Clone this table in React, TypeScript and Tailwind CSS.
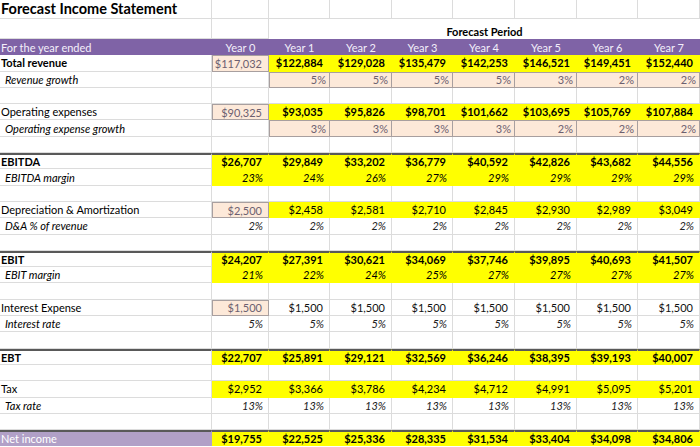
import React from 'react';

type Kind = 'w' | 'y' | 'p';
interface Val { t: string; k: Kind; b?: boolean; i?: boolean; p?: boolean }
interface Row { label?: string; ls?: 'b' | 'n' | 'i' | 'net'; cells: Val[]; thick?: boolean }

const COLS = ['w-[57px]', 'w-[61px]', 'w-[62px]', 'w-[61px]', 'w-[62px]', 'w-[62px]', 'w-[61px]', 'w-[62px]'];
const YEARS = ['Year 0', 'Year 1', 'Year 2', 'Year 3', 'Year 4', 'Year 5', 'Year 6', 'Year 7'];

const yb = (a: string[]): Val[] => a.map((t) => ({ t, k: 'y', b: true }));
const yn = (a: string[]): Val[] => a.map((t) => ({ t, k: 'y' }));
const yi = (a: string[]): Val[] => a.map((t) => ({ t, k: 'y', i: true, p: true }));
const wi = (a: string[]): Val[] => a.map((t) => ({ t, k: 'w', i: true, p: true }));
const wn = (a: string[]): Val[] => a.map((t) => ({ t, k: 'w' }));
const pp = (a: string[]): Val[] => a.map((t) => ({ t, k: 'p', p: true }));
const pv = (t: string): Val => ({ t, k: 'p' });
const blank = (): Val[] => Array.from({ length: 8 }, () => ({ t: '', k: 'w' as Kind }));
const same = (t: string) => Array.from({ length: 8 }, () => t);

const ROWS: Row[] = [
  { label: 'Total revenue', ls: 'b', cells: [pv('$117,032'), ...yb(['$122,884', '$129,028', '$135,479', '$142,253', '$146,521', '$149,451', '$152,440'])] },
  { label: 'Revenue growth', ls: 'i', cells: [{ t: '', k: 'w' }, ...pp(['5%', '5%', '5%', '5%', '3%', '2%', '2%'])] },
  { cells: blank() },
  { label: 'Operating expenses', ls: 'n', cells: [pv('$90,325'), ...yb(['$93,035', '$95,826', '$98,701', '$101,662', '$103,695', '$105,769', '$107,884'])] },
  { label: 'Operating expense growth', ls: 'i', cells: [{ t: '', k: 'w' }, ...pp(['3%', '3%', '3%', '3%', '2%', '2%', '2%'])] },
  { cells: blank() },
  { label: 'EBITDA', ls: 'b', thick: true, cells: yb(['$26,707', '$29,849', '$33,202', '$36,779', '$40,592', '$42,826', '$43,682', '$44,556']) },
  { label: 'EBITDA margin', ls: 'i', cells: yi(['23%', '24%', '26%', '27%', '29%', '29%', '29%', '29%']) },
  { cells: blank() },
  { label: 'Depreciation & Amortization', ls: 'n', cells: [pv('$2,500'), ...yn(['$2,458', '$2,581', '$2,710', '$2,845', '$2,930', '$2,989', '$3,049'])] },
  { label: 'D&A % of revenue', ls: 'i', cells: wi(same('2%')) },
  { cells: blank() },
  { label: 'EBIT', ls: 'b', thick: true, cells: yb(['$24,207', '$27,391', '$30,621', '$34,069', '$37,746', '$39,895', '$40,693', '$41,507']) },
  { label: 'EBIT margin', ls: 'i', cells: yi(['21%', '22%', '24%', '25%', '27%', '27%', '27%', '27%']) },
  { cells: blank() },
  { label: 'Interest Expense', ls: 'n', cells: [pv('$1,500'), ...wn(same('$1,500').slice(1))] },
  { label: 'Interest rate', ls: 'i', cells: wi(same('5%')) },
  { cells: blank() },
  { label: 'EBT', ls: 'b', thick: true, cells: yb(['$22,707', '$25,891', '$29,121', '$32,569', '$36,246', '$38,395', '$39,193', '$40,007']) },
  { cells: blank() },
  { label: 'Tax', ls: 'n', cells: yn(['$2,952', '$3,366', '$3,786', '$4,234', '$4,712', '$4,991', '$5,095', '$5,201']) },
  { label: 'Tax rate', ls: 'i', cells: wi(same('13%')) },
  { cells: blank() },
  { label: 'Net income', ls: 'net', thick: true, cells: yb(['$19,755', '$22,525', '$25,336', '$28,335', '$31,534', '$33,404', '$34,098', '$34,806']) },
];

function cellClass(v: Val, thick: boolean, bl: boolean, bt: boolean) {
  const c = ['h-full shrink-0 flex items-center justify-end whitespace-nowrap border-r border-b'];
  if (v.k === 'y') c.push('bg-[#ffff00] border-[#ffff00] text-black');
  else if (v.k === 'p') c.push('bg-[#fde9d9] border-[#a89f9f] text-[#6c6070]');
  else c.push('border-[#dcdcdc] text-[#111]');
  if (v.k === 'p' && bl) c.push('border-l');
  if (v.k === 'p' && bt) c.push('border-t');
  if (thick) c.push('border-t-2 border-t-[#595959]');
  if (v.b) c.push('font-bold');
  if (v.i) c.push('italic text-[#222]');
  c.push(v.p ? (v.k === 'p' ? 'pr-[3px]' : 'pr-[5px]') : 'pr-[6px]');
  return c.join(' ');
}

function labelClass(r: Row) {
  const c = ['h-full w-[212px] shrink-0 flex items-center whitespace-nowrap border-r border-b'];
  if (r.ls === 'net') c.push('bg-[#b1a0c7] border-[#b1a0c7] text-white pl-[1px]');
  else c.push('border-[#dcdcdc] text-black');
  if (r.ls === 'b') c.push('font-bold pl-[1px]');
  if (r.ls === 'n') c.push('pl-[1px]');
  if (r.ls === 'i') c.push('italic pl-[5px] text-[#222]');
  if (r.thick) c.push('border-t-2 border-t-[#595959]');
  return c.join(' ');
}

export default function App() {
  return (
    <div className="w-[700px] h-[447px] overflow-hidden bg-white text-[11px] leading-none" style={{ fontFamily: 'Lato, "Open Sans", sans-serif' }}>
      {/* title */}
      <div className="flex h-[19px]">
        <div className="w-[212px] shrink-0 h-full border-r border-b border-[#dcdcdc] flex items-center pl-[1px] font-bold text-[14.5px] text-black whitespace-nowrap">
          Forecast Income Statement
        </div>
        {COLS.map((w, j) => (
          <div key={j} className={`${w} shrink-0 h-full border-r border-b border-[#dcdcdc]`} />
        ))}
      </div>
      <div className="flex h-[20px]">
        <div className="w-[212px] shrink-0 h-full border-r border-b border-[#dcdcdc]" />
        <div className="w-[57px] shrink-0 h-full border-r border-b border-[#dcdcdc]" />
        <div className="w-[431px] shrink-0 h-full flex items-end justify-center pb-[2px] font-bold text-black">
          Forecast Period
        </div>
      </div>
      {/* header */}
      <div className="flex h-[16.3px] bg-[#7f63a6] text-[#f3effa]">
        <div className="w-[212px] shrink-0 h-full flex items-center pl-[1px]">For the year ended</div>
        {COLS.map((w, j) => (
          <div key={j} className={`${w} shrink-0 h-full flex items-center justify-center`}>{YEARS[j]}</div>
        ))}
      </div>
      {ROWS.map((r, i) => {
        const prev = i > 0 ? ROWS[i - 1] : null;
        return (
          <div key={i} className="flex h-[16.3px]">
            <div className={labelClass(r)}>{r.label ?? ''}</div>
            {r.cells.map((v, j) => {
              const bl = j === 0 || r.cells[j - 1].k !== 'p';
              const bt = !prev || prev.cells[j].k !== 'p';
              return (
                <div key={j} className={`${COLS[j]} ${cellClass(v, !!r.thick, bl, bt)}`}>
                  {v.t}
                </div>
              );
            })}
          </div>
        );
      })}
    </div>
  );
}
